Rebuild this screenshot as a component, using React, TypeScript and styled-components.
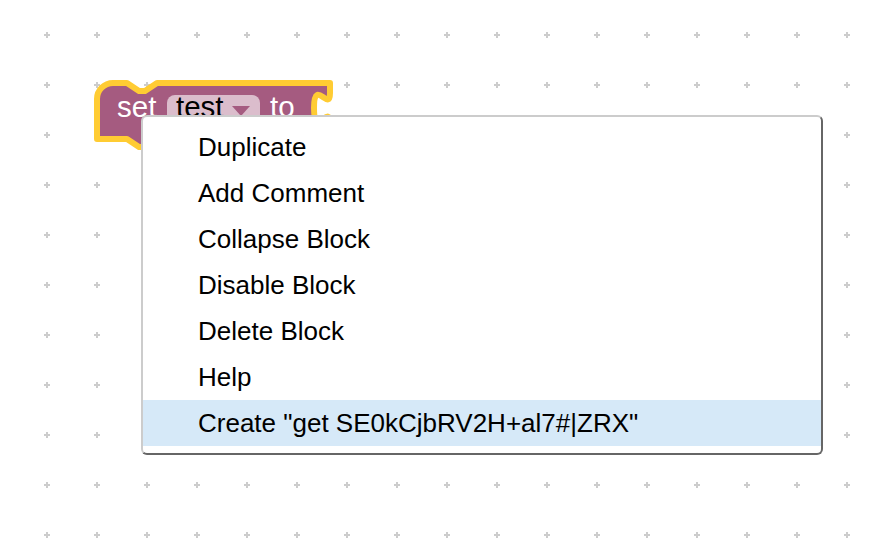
import React from "react";
import styled, { createGlobalStyle } from "styled-components";

const GlobalStyle = createGlobalStyle`
  html, body {
    margin: 0;
    padding: 0;
    background: #ffffff;
  }
  body {
    font-family: "Liberation Sans", Arial, sans-serif;
  }
`;

const Workspace = styled.div`
  position: relative;
  width: 888px;
  height: 540px;
  overflow: hidden;
  background: #ffffff;
`;

const GridLayer = styled.svg`
  position: absolute;
  inset: 0;
  width: 100%;
  height: 100%;
`;

const BlockCanvas = styled.svg<{ $x: number; $y: number }>`
  position: absolute;
  left: ${(p) => p.$x}px;
  top: ${(p) => p.$y}px;
  overflow: visible;
`;

const Menu = styled.ul<{ $x: number; $y: number; $w: number }>`
  position: absolute;
  left: ${(p) => p.$x}px;
  top: ${(p) => p.$y}px;
  width: ${(p) => p.$w}px;
  box-sizing: border-box;
  margin: 0;
  padding: 7px 0;
  list-style: none;
  background: #ffffff;
  border: 2px solid;
  border-color: #cccccc #666666 #666666 #cccccc;
  border-radius: 6px;
  font-family: "Liberation Sans", Arial, sans-serif;
  font-size: 26px;
  color: #000000;
`;

const MenuItem = styled.li<{ $highlight?: boolean }>`
  display: flex;
  align-items: center;
  height: 46px;
  box-sizing: border-box;
  padding: 8px 0 8px 55px;
  line-height: 30px;
  white-space: nowrap;
  background: ${(p) => (p.$highlight ? "#d6e9f8" : "transparent")};
`;

const BLOCK_COLOUR = "#a55b80";
const FIELD_FONT = `"Liberation Sans", Arial, sans-serif`;

function Grid() {
  return (
    <GridLayer>
      <defs>
        <pattern id="grid" x="22" y="10" width="50" height="50" patternUnits="userSpaceOnUse">
          <rect x="22" y="24" width="6" height="2" fill="#cccccc" />
          <rect x="24" y="22" width="2" height="6" fill="#cccccc" />
        </pattern>
      </defs>
      <rect width="100%" height="100%" fill="url(#grid)" />
    </GridLayer>
  );
}

function SetBlock() {
  const path =
    "M 0,16 A 16,16 0 0,1 16,0 H 30 l 12,8 6,0 12,-8 H 233 v 10 c 0,20 -16,-16 -16,15 s 16,-5 16,15 V 56 H 60 l -12,8 -6,0 -12,-8 H 0 Z";
  return (
    <BlockCanvas $x={88} $y={72} width={256} height={86}>
      <g transform="translate(9,11)">
        <path
          d={path}
          fill={BLOCK_COLOUR}
          stroke="#ffcc33"
          strokeWidth={6}
          strokeLinejoin="round"
        />
        <text x={20} y={34} fill="#ffffff" fontFamily={FIELD_FONT} fontSize={29.5}>
          set
        </text>
        <rect x={70} y={12} width={93} height={36} rx={8} ry={8} fill="#dbbdcc" />
        <text x={79} y={34} fill="#000000" fontFamily={FIELD_FONT} fontSize={29.5}>
          test
        </text>
        <path d="M 135,23 L 153,23 L 144,33 Z" fill={BLOCK_COLOUR} />
        <text x={173} y={34} fill="#ffffff" fontFamily={FIELD_FONT} fontSize={29.5}>
          to
        </text>
      </g>
    </BlockCanvas>
  );
}

const items = [
  "Duplicate",
  "Add Comment",
  "Collapse Block",
  "Disable Block",
  "Delete Block",
  "Help",
  'Create "get SE0kCjbRV2H+al7#|ZRX"',
];

export default function App() {
  return (
    <>
      <GlobalStyle />
      <Workspace>
        <Grid />
        <SetBlock />
        <Menu $x={141} $y={115} $w={682}>
          {items.map((label, i) => (
            <MenuItem key={label} $highlight={i === items.length - 1}>
              {label}
            </MenuItem>
          ))}
        </Menu>
      </Workspace>
    </>
  );
}
